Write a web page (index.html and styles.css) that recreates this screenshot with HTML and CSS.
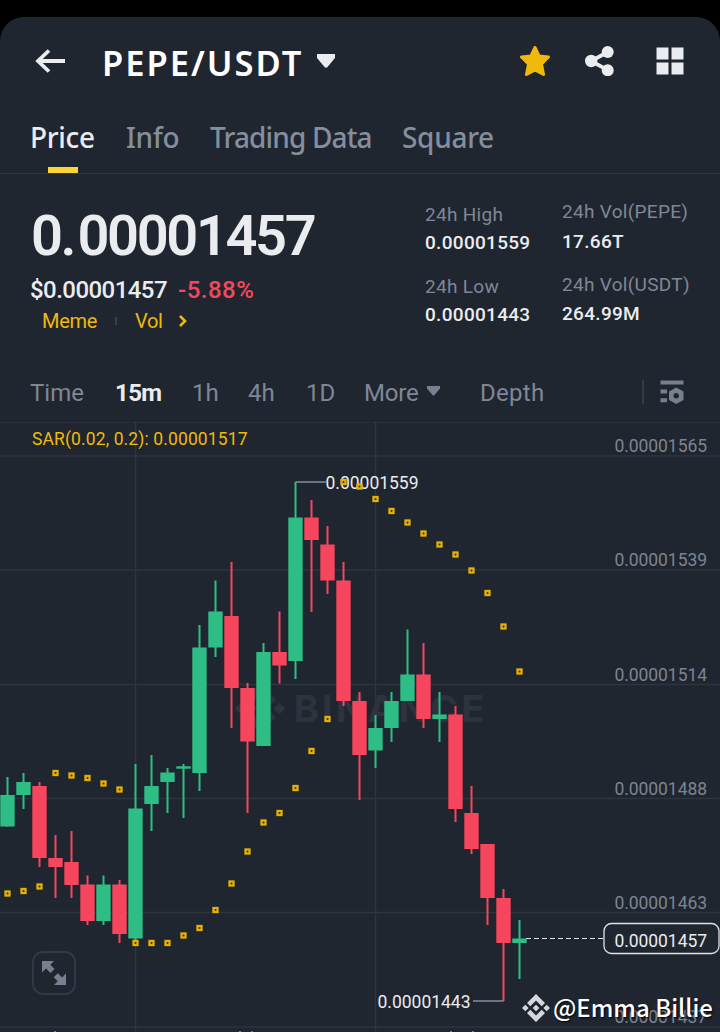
FILE: index.html
```
<!DOCTYPE html>
<html lang="en">
<head>
   <meta charset="UTF-8">
   <title>PEPE/USDT</title>
   <meta name="viewport" content="width=device-width, initial-scale=1.0">
   <link rel="stylesheet" href="styles.css">
</head>
<body>
   <div class="app">
      <header class="header">
         <svg class="back" width="32" height="26" viewBox="0 0 32 26"><path d="M31 13H4M15 2.500L4 13L15 23.500" fill="none" stroke="#eaecef" stroke-width="3.800"/></svg>
         <h1>PEPE/USDT</h1>
         <svg class="caret" width="18" height="14" viewBox="0 0 18 14"><path d="M0 0H18V4L10.500 13Q9 14.500 7.500 13L0 4Z" fill="#eaecef"/></svg>
         <div class="actions">
            <svg width="30" height="30" viewBox="0 0 30 30"><path d="M15 1.500L19 10L28.500 11L21.500 18L23.500 28.500L15 24L6.500 28.500L8.500 18L1.500 11L11 10Z" fill="#f0b90b" stroke="#f0b90b" stroke-width="3" stroke-linejoin="round"/></svg>
            <svg width="30" height="30" viewBox="0 0 30 30"><g fill="#eaecef"><circle cx="6.200" cy="15" r="6.200"/><circle cx="22.700" cy="6" r="6"/><circle cx="22.700" cy="24.200" r="6"/></g><path d="M22.700 6L6.200 15L22.700 24.200" fill="none" stroke="#eaecef" stroke-width="3.800"/></svg>
            <svg width="28" height="28" viewBox="0 0 28 28"><path d="M.5.5h12v12H.5zM15.500.5h12v12h-12zM.5 15.500h12v12H.5zM15.500 15.500h12v12h-12z" fill="#eaecef"/></svg>
         </div>
      </header>

      <nav class="tabs">
         <a class="tab active">Price</a>
         <a class="tab info">Info</a>
         <a class="tab trading">Trading Data</a>
         <a class="tab square">Square</a>
      </nav>

      <section class="summary">
         <div class="quote">
            <div class="last">0<span class="dot">.</span>00001457</div>
            <div class="fiat"><span>$0.00001457</span><span class="change">-5.88%</span></div>
            <div class="tags">
               <span>Meme</span><i class="tag-sep"></i><span>Vol</span>
               <svg width="8" height="12" viewBox="0 0 8 12"><path d="M1 1L6 6L1 11" fill="none" stroke="#f0b90b" stroke-width="2.600"/></svg>
            </div>
         </div>
         <dl class="stats left">
            <dt class="high">24h High</dt>
            <dd>0.00001559</dd>
            <dt class="low">24h Low</dt>
            <dd>0.00001443</dd>
         </dl>
         <dl class="stats right">
            <dt>24h Vol(PEPE)</dt>
            <dd>17.66T</dd>
            <dt>24h Vol(USDT)</dt>
            <dd>264.99M</dd>
         </dl>
      </section>

      <div class="intervals">
         <span class="i-time">Time</span>
         <span class="i-15m active">15m</span>
         <span class="i-1h">1h</span>
         <span class="i-4h">4h</span>
         <span class="i-1d">1D</span>
         <span class="i-more">More <svg width="13" height="10" viewBox="0 0 13 10"><path d="M0 0H13V2.500L7.500 9Q6.500 10 5.500 9L0 2.500Z" fill="#76808f"/></svg></span>
         <span class="i-depth">Depth</span>
         <i class="divider"></i>
         <svg width="24" height="24" viewBox="0 0 24 24"><path d="M.5.5h23v4H.5zM.5 9.500h6.500v4H.5zM.5 18.300h6.500v4H.5z" fill="#76808f"/><path fill-rule="evenodd" d="M16.200 7.500L23.500 11.500V20L16.200 24L9 20V11.500ZM16.200 13a2.800 2.800 0 1 0 .01 0Z" fill="#76808f"/></svg>
      </div>

      <div class="chart">
         <svg id="plot" width="720" height="610" viewBox="0 422 720 610"></svg>
         <button class="expand" aria-label="Expand">
            <svg width="26" height="26" viewBox="0 0 26 26"><path d="M1 1H13L9.300 4.800L13.500 9L9.500 13L5 8.500L1 12.500ZM25 25H13L16.700 21.200L12.800 17.300L16.800 13.300L21 17.500L25 13.500Z" fill="#76808f"/></svg>
         </button>
         <div class="credit">
            <svg width="28" height="28" viewBox="-14 -14 28 28"><use href="#mark"/></svg>
            <span>@Emma Billie</span>
         </div>
      </div>
   </div>
   <script src="chart.js"></script>
</body>
</html>
```
FILE: styles.css
```
body {
   margin: 0;
   background-color: #000;
   font-family: Roboto, Arial, sans-serif;
   color: #eaecef;
}
.app {
   box-sizing: border-box;
   width: 720px;
   height: 1015px;
   margin-top: 17px;
   background-color: #202630;
   border-radius: 24px 24px 0 0;
   overflow: hidden;
}
.header {
   display: flex;
   align-items: center;
   height: 88px;
   padding: 0 36px 0 34px;
}
h1 {
   margin: 3px 0 0 36px;
   width: 199px;
   font-family: "Noto Sans", sans-serif;
   font-size: 34.5px;
   font-weight: 650;
   line-height: 44px;
   letter-spacing: 2px;
   color: #fff;
   white-space: nowrap;
}
.caret {
   margin-left: 16px;
}
.actions {
   display: flex;
   align-items: center;
   margin-left: auto;
}
.actions svg + svg {
   margin-left: 35px;
}
.actions svg:last-child {
   margin-left: 41px;
}
.tabs {
   display: flex;
   box-sizing: border-box;
   height: 69px;
   padding-left: 30px;
   border-bottom: 1px solid #303741;
   font-family: "Noto Sans", sans-serif;
   font-size: 28px;
   font-weight: 500;
   line-height: 64px;
   letter-spacing: -0.3px;
   color: #848e9c;
   white-space: nowrap;
}
.tab {
   position: relative;
}
.tab.active {
   width: 96px;
   color: #eaecef;
}
.tab.active::after {
   content: "";
   position: absolute;
   left: 18px;
   bottom: 0;
   width: 30px;
   height: 6px;
   background-color: #fcd535;
}
.info {
   width: 84px;
}
.trading {
   width: 192px;
   letter-spacing: -0.85px;
}
.summary {
   display: flex;
   height: 187px;
   white-space: nowrap;
}
.quote {
   width: 394px;
   padding-left: 31px;
}
.last {
   margin-top: 29px;
   font-size: 56px;
   font-weight: 600;
   line-height: 66px;
   letter-spacing: -2.4px;
}
.dot {
   letter-spacing: 1px;
}
.fiat {
   display: flex;
   margin-top: 6px;
   font-size: 24px;
   font-weight: 500;
   line-height: 30px;
   letter-spacing: -0.55px;
}
.fiat span:first-child {
   margin-left: -1px;
   width: 148px;
}
.change {
   color: #f6465d;
   letter-spacing: 0.5px;
}
.tags {
   display: flex;
   align-items: center;
   margin-top: 3px;
   padding-left: 11px;
   font-size: 20px;
   line-height: 26px;
   letter-spacing: -0.3px;
   color: #f0b90b;
}
.tag-sep {
   width: 2px;
   height: 8px;
   margin: 0 18px;
   background-color: #38404b;
}
.tags svg {
   margin-left: 16px;
}
.stats {
   margin: 27px 0 0;
   font-size: 19px;
   line-height: 28px;
   letter-spacing: 0.3px;
}
.stats.left {
   width: 137px;
}
.stats.right {
   margin-top: 24px;
}
.stats dt {
   height: 28px;
   color: #7f8796;
}
.stats dd {
   height: 28px;
   margin: 0 0 16px;
   font-weight: 500;
}
.stats.right dd {
   line-height: 29px;
}
.stats.right dt {
   height: 28.5px;
}
.intervals {
   display: flex;
   align-items: center;
   height: 61px;
   padding: 0 36px 0 30px;
   font-size: 24px;
   color: #7f8796;
   white-space: nowrap;
}
.intervals span {
   padding-top: 2px;
}
.i-time {
   width: 84px;
}
.intervals .i-15m {
   width: 77px;
   padding-left: 1px;
   font-weight: 700;
   letter-spacing: -0.6px;
   color: #eaecef;
}
.i-1h {
   width: 56px;
}
.i-4h {
   width: 58px;
}
.i-1d {
   width: 58px;
}
.i-more {
   width: 116px;
   letter-spacing: -0.2px;
}
.i-depth {
   letter-spacing: 0.3px;
}
.i-more svg {
   margin-left: 3px;
   vertical-align: 5px;
}
.divider {
   width: 2px;
   height: 24px;
   margin: 0 16px 0 auto;
   background-color: #353c47;
}
.chart {
   position: relative;
   height: 610px;
}
#plot {
   display: block;
}
#plot text {
   font-size: 17.5px;
}
.grid {
   stroke: #2e353f;
   stroke-width: 1.5;
}
.axis {
   fill: #7c8492;
}
#plot .brand {
   font-family: Inter, sans-serif;
   font-size: 37.5px;
   font-weight: 700;
   fill: #2d323d;
}
.up {
   fill: #2ebd85;
}
.down {
   fill: #f6465d;
}
.sar {
   fill: #202630;
   stroke: #e6b00c;
   stroke-width: 2.3;
}
.light {
   fill: #eaecef;
}
.yellow {
   fill: #f0b90b;
}
.expand {
   position: absolute;
   left: 32px;
   top: 529px;
   display: flex;
   align-items: center;
   justify-content: center;
   box-sizing: border-box;
   width: 44px;
   height: 44px;
   padding: 0;
   border: 2px solid #323943;
   border-radius: 11px;
   background: none;
}
.credit {
   position: absolute;
   left: 522px;
   top: 568px;
   display: flex;
   align-items: center;
   gap: 3px;
   height: 36px;
   font-family: "Noto Sans CJK SC", sans-serif;
   font-size: 24px;
   font-weight: 500;
   line-height: 35px;
   color: #fff;
   white-space: nowrap;
   text-shadow: 1px 1px 2px #000;
}
.credit span {
   margin-top: -4px;
}
.credit svg {
   fill: #d6d7da;
}
```
FILE: chart.js
```
// high, body top, body bottom, low, direction
var candles = [
   [777, 795, 826.5, 826.5, 1], [773, 782, 795, 809, 1], [782, 786, 858, 867, 0],
   [835, 858, 867, 898, 0], [831, 862, 885, 898, 0], [875.5, 884.5, 921, 925, 0],
   [875.5, 884.5, 921, 925, 1], [880, 884.5, 934, 943, 0], [764, 808.5, 938.5, 940, 1],
   [755, 786, 804, 831, 1], [768, 772.5, 782, 813, 1], [764, 766.3, 768.7, 818, 1],
   [625, 647.5, 773, 791, 1], [580.5, 611.5, 647.5, 657, 1], [562, 616, 688, 728, 0],
   [683, 688, 741.5, 813, 0], [643, 652, 746, 746, 1], [611.5, 652, 665.5, 683.5, 0],
   [482, 517.5, 661, 679, 1], [500, 517.5, 540, 612, 0], [526, 544.5, 580.5, 594, 0],
   [562, 580.5, 701, 706, 0], [692, 701, 755, 800, 0], [715, 728, 750.5, 768, 1],
   [692, 701, 728, 742, 1], [629.5, 674.5, 701, 701, 1], [643, 674.5, 719, 728, 0],
   [692, 714.5, 719, 742, 1], [706, 714.5, 809, 822, 0], [786, 813, 849, 854, 0],
   [844, 844, 898, 925, 0], [889, 898, 943, 1001, 0], [920, 938.5, 943, 979, 1]
];
var sar = [893.5, 891, 886.5, 773, 775.5, 778, 783.5, 789.5, 943, 943, 943, 935.5, 928, 910,
   883.5, 851.5, 822.5, 813, 788, 751, 719, 482, 486.5, 499, 511, 522.5, 533.5, 544.5, 554.5,
   570.5, 593, 626.5, 671.5];
var levels = [[456, "0.00001565"], [570, "0.00001539"], [684.5, "0.00001514"],
   [798.5, "0.00001488"], [912.5, "0.00001463"], [1027, "0.00001437"]];

function label(x, y, text, width, cls) {
   return '<text class="' + cls + '" x="' + x + '" y="' + y + '" textLength="' + width + '">' + text + '</text>';
}

var out = '<defs><g id="mark"><path d="M0 -14L9 -5L5.700 -1.700L0 -7.400L-5.700 -1.700L-9 -5Z"/>' +
   '<path d="M0 14L9 5L5.700 1.700L0 7.400L-5.700 1.700L-9 5Z"/>' +
   '<path d="M0 -3.300L3.300 0L0 3.300L-3.300 0ZM-10.700 -3.300L-7.400 0L-10.700 3.300L-14 0ZM10.700 -3.300L14 0L10.700 3.300L7.400 0Z"/></g></defs>';

out += '<path class="grid" d="M0 422H720M135.500 422V1032M375.500 422V1032"/>';
levels.forEach(function(l) {
   out += '<path class="grid" d="M0 ' + l[0] + 'H720"/>';
});
out += '<use href="#mark" transform="translate(260 708.500) scale(1.800)" fill="#2d323d"/>';
out += label(294, 722, "BINANCE", 190, "brand");
levels.forEach(function(l) {
   out += label(614.5, l[0] - 4, l[1], 92.5, "axis");
});
out += label(32, 445, "SAR(0.02, 0.2): 0.00001517", 215.5, "yellow");

candles.forEach(function(c, i) {
   var x = 7.5 + i * 16;
   out += '<g class="' + (c[4] ? "up" : "down") + '">' +
      '<rect x="' + (x - 1) + '" y="' + c[0] + '" width="2" height="' + (c[3] - c[0]) + '"/>' +
      '<rect x="' + (x - 7.2) + '" y="' + c[1] + '" width="14.4" height="' + (c[2] - c[1]) + '"/></g>';
});

out += '<path d="M295.500 482H326M473 1001H503.500" stroke="#848e9c" stroke-width="1.500"/>';
out += label(325.5, 489, "0.00001559", 93, "light");
out += label(377.5, 1008, "0.00001443", 93, "light");

sar.forEach(function(y, i) {
   out += '<rect class="sar" x="' + (5.5 + i * 16) + '" y="' + (y - 2) + '" width="4" height="4"/>';
});

// current price line and its tag
out += '<path d="M526 938.500H604" stroke="#eaecef" stroke-width="1.200" stroke-dasharray="5 3"/>';
out += '<rect x="604" y="923.500" width="115" height="30" rx="7.500" fill="#202630" stroke="#dfe1e5" stroke-width="1.300"/>';
out += label(614.5, 947, "0.00001457", 92.5, "light");
out += '<path d="M54 1031h2v1h-2zM239 1031h2v1h-2zM251 1031h2v1h-2zM450 1031h2v1h-2zM472 1031h2v1h-2z" fill="#767e8c"/>';

document.getElementById("plot").innerHTML = out;
```
